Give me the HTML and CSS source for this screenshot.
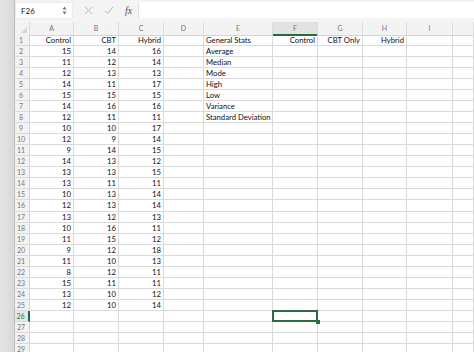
FILE: index.html
```html
<!DOCTYPE html>
<html>
<head>
<meta charset="utf-8">
<link rel="stylesheet" href="styles.css">
</head>
<body>
<div class="app">
  <div class="side"></div>
  <div class="main">
    <div class="fbar">
      <div class="namebox"><span>F26</span>
        <svg class="spin" width="5" height="9" viewBox="0 0 5 9"><path d="M2.5 0.5 L4.5 3.5 L0.5 3.5 Z M0.5 5.5 L4.5 5.5 L2.5 8.5 Z" fill="#777"/></svg>
      </div>
      <div class="icons">
        <svg width="9" height="9" viewBox="0 0 9 9"><path d="M1 1 L8 8 M8 1 L1 8" stroke="#b8b8b8" stroke-width="1"/></svg>
        <svg width="10" height="9" viewBox="0 0 10 9"><path d="M1 5 L3.5 7.5 L9 1" stroke="#b8b8b8" stroke-width="1" fill="none"/></svg>
        <span class="fx">fx</span>
      </div>
      <div class="finput"></div>
    </div>
    <div class="sheet">
      <div class="row hdr"><span class="corner"></span><span>A</span><span>B</span><span>C</span><span>D</span><span>E</span><span class="sel">F</span><span>G</span><span>H</span><span>I</span><span></span></div>
      <div class="row"><span class="rh">1</span><span class="r">Control</span><span class="r">CBT</span><span class="r">Hybrid</span><span></span><span>General Stats</span><span class="r">Control</span><span class="r">CBT Only</span><span class="r">Hybrid</span><span></span><span></span></div>
      <div class="row"><span class="rh">2</span><span class="r">15</span><span class="r">14</span><span class="r">16</span><span></span><span>Average</span><span></span><span></span><span></span><span></span><span></span></div>
      <div class="row"><span class="rh">3</span><span class="r">11</span><span class="r">12</span><span class="r">14</span><span></span><span>Median</span><span></span><span></span><span></span><span></span><span></span></div>
      <div class="row"><span class="rh">4</span><span class="r">12</span><span class="r">13</span><span class="r">13</span><span></span><span>Mode</span><span></span><span></span><span></span><span></span><span></span></div>
      <div class="row"><span class="rh">5</span><span class="r">14</span><span class="r">11</span><span class="r">17</span><span></span><span>High</span><span></span><span></span><span></span><span></span><span></span></div>
      <div class="row"><span class="rh">6</span><span class="r">15</span><span class="r">15</span><span class="r">15</span><span></span><span>Low</span><span></span><span></span><span></span><span></span><span></span></div>
      <div class="row"><span class="rh">7</span><span class="r">14</span><span class="r">16</span><span class="r">16</span><span></span><span>Variance</span><span></span><span></span><span></span><span></span><span></span></div>
      <div class="row"><span class="rh">8</span><span class="r">12</span><span class="r">11</span><span class="r">11</span><span></span><span>Standard Deviation</span><span></span><span></span><span></span><span></span><span></span></div>
      <div class="row"><span class="rh">9</span><span class="r">10</span><span class="r">10</span><span class="r">17</span><span></span><span></span><span></span><span></span><span></span><span></span><span></span></div>
      <div class="row"><span class="rh">10</span><span class="r">12</span><span class="r">9</span><span class="r">14</span><span></span><span></span><span></span><span></span><span></span><span></span><span></span></div>
      <div class="row"><span class="rh">11</span><span class="r">9</span><span class="r">14</span><span class="r">15</span><span></span><span></span><span></span><span></span><span></span><span></span><span></span></div>
      <div class="row"><span class="rh">12</span><span class="r">14</span><span class="r">13</span><span class="r">12</span><span></span><span></span><span></span><span></span><span></span><span></span><span></span></div>
      <div class="row"><span class="rh">13</span><span class="r">13</span><span class="r">13</span><span class="r">15</span><span></span><span></span><span></span><span></span><span></span><span></span><span></span></div>
      <div class="row"><span class="rh">14</span><span class="r">13</span><span class="r">11</span><span class="r">11</span><span></span><span></span><span></span><span></span><span></span><span></span><span></span></div>
      <div class="row"><span class="rh">15</span><span class="r">10</span><span class="r">13</span><span class="r">14</span><span></span><span></span><span></span><span></span><span></span><span></span><span></span></div>
      <div class="row"><span class="rh">16</span><span class="r">12</span><span class="r">13</span><span class="r">14</span><span></span><span></span><span></span><span></span><span></span><span></span><span></span></div>
      <div class="row"><span class="rh">17</span><span class="r">13</span><span class="r">12</span><span class="r">13</span><span></span><span></span><span></span><span></span><span></span><span></span><span></span></div>
      <div class="row"><span class="rh">18</span><span class="r">10</span><span class="r">16</span><span class="r">11</span><span></span><span></span><span></span><span></span><span></span><span></span><span></span></div>
      <div class="row"><span class="rh">19</span><span class="r">11</span><span class="r">15</span><span class="r">12</span><span></span><span></span><span></span><span></span><span></span><span></span><span></span></div>
      <div class="row"><span class="rh">20</span><span class="r">9</span><span class="r">12</span><span class="r">18</span><span></span><span></span><span></span><span></span><span></span><span></span><span></span></div>
      <div class="row"><span class="rh">21</span><span class="r">11</span><span class="r">10</span><span class="r">13</span><span></span><span></span><span></span><span></span><span></span><span></span><span></span></div>
      <div class="row"><span class="rh">22</span><span class="r">8</span><span class="r">12</span><span class="r">11</span><span></span><span></span><span></span><span></span><span></span><span></span><span></span></div>
      <div class="row"><span class="rh">23</span><span class="r">15</span><span class="r">11</span><span class="r">11</span><span></span><span></span><span></span><span></span><span></span><span></span><span></span></div>
      <div class="row"><span class="rh">24</span><span class="r">13</span><span class="r">10</span><span class="r">12</span><span></span><span></span><span></span><span></span><span></span><span></span><span></span></div>
      <div class="row"><span class="rh">25</span><span class="r">12</span><span class="r">10</span><span class="r">14</span><span></span><span></span><span></span><span></span><span></span><span></span><span></span></div>
      <div class="row"><span class="rh rhsel">26</span><span></span><span></span><span></span><span></span><span></span><span class="active"></span><span></span><span></span><span></span><span></span></div>
      <div class="row"><span class="rh">27</span><span></span><span></span><span></span><span></span><span></span><span></span><span></span><span></span><span></span><span></span></div>
      <div class="row"><span class="rh">28</span><span></span><span></span><span></span><span></span><span></span><span></span><span></span><span></span><span></span><span></span></div>
      <div class="row"><span class="rh">29</span><span></span><span></span><span></span><span></span><span></span><span></span><span></span><span></span><span></span><span></span></div>
    </div>
  </div>
</div>
</body>
</html>
```

FILE: styles.css
```css
html, body {
  margin: 0;
  padding: 0;
  background: #ffffff;
}
body {
  font-family: "Lato", "Open Sans", sans-serif;
  color: #111111;
  width: 474px;
  height: 352px;
  overflow: hidden;
}
.app {
  display: flex;
  height: 352px;
}
.side {
  width: 14px;
  flex: none;
  background: linear-gradient(to right, #e4e4e4, #d9d9d9);
  border-right: 1px solid #bdbdbd;
}
.main {
  flex: 1;
  display: flex;
  flex-direction: column;
  min-width: 0;
}
.fbar {
  height: 22px;
  flex: none;
  display: flex;
  align-items: flex-start;
  background: #f4f4f4;
  box-sizing: border-box;
  padding-top: 2px;
}
.namebox {
  width: 58px;
  height: 17px;
  background: #ffffff;
  border: 1px solid #ececec;
  display: flex;
  align-items: center;
  justify-content: space-between;
  box-sizing: border-box;
  padding: 0 5px 0 5px;
  font-size: 8px;
  color: #222;
}
.icons {
  width: 65px;
  height: 17px;
  display: flex;
  align-items: center;
  gap: 11px;
  padding-left: 11px;
  box-sizing: border-box;
}
.fx {
  font-family: "Liberation Serif", serif;
  font-style: italic;
  font-size: 10px;
  color: #555;
}
.finput {
  flex: 1;
  height: 16px;
  background: #ffffff;
  border-left: 1px solid #e0e0e0;
}
.sheet {
  flex: 1;
  display: flex;
  flex-direction: column;
}
.row {
  display: grid;
  grid-template-columns: 15px 44px 45px 45px 40px 69px 45px 45px 44px 46px 1fr;
  height: 11.04px;
  font-size: 7.7px;
}
.row > span {
  box-sizing: border-box;
  border-right: 1px solid #dadada;
  border-bottom: 1px solid #dadada;
  padding: 0 2px 0 2px;
  line-height: 10px;
  white-space: nowrap;
  overflow: visible;
  position: relative;
}
.row > span.r {
  text-align: right;
}
.row.hdr {
  height: 13px;
}
.row.hdr > span {
  background: #f3f3f3;
  color: #777;
  text-align: center;
  line-height: 12px;
  font-size: 7px;
  border-bottom: 1px solid #d4d4d4;
  border-right: 1px solid #dcdcdc;
}
.row.hdr > span.sel {
  background: #e2e2e2;
  border-bottom: 2px solid #1e6e42;
}
.row.hdr > span.corner {
  background: #f3f3f3;
}
.corner::after {
  content: "";
  position: absolute;
  right: 2px;
  bottom: 2px;
  width: 0;
  height: 0;
  border-left: 6px solid transparent;
  border-bottom: 6px solid #d6d6d6;
}
.row > span.rh {
  background: #f3f3f3;
  color: #777;
  font-size: 7px;
  text-align: center;
  padding: 0 2px 0 0;
  border-right: 1px solid #d4d4d4;
}
.row > span.rhsel {
  color: #2b7a4b;
  background: #e6e6e6;
  border-right: 2px solid #1e6e42;
}
.active::after {
  content: "";
  position: absolute;
  left: -1px;
  top: -1px;
  right: -1px;
  bottom: -1px;
  border: 2px solid #2a6b45;
}
.active::before {
  content: "";
  position: absolute;
  right: -3px;
  bottom: -3px;
  width: 4px;
  height: 4px;
  background: #2a6b45;
  z-index: 2;
}
```
